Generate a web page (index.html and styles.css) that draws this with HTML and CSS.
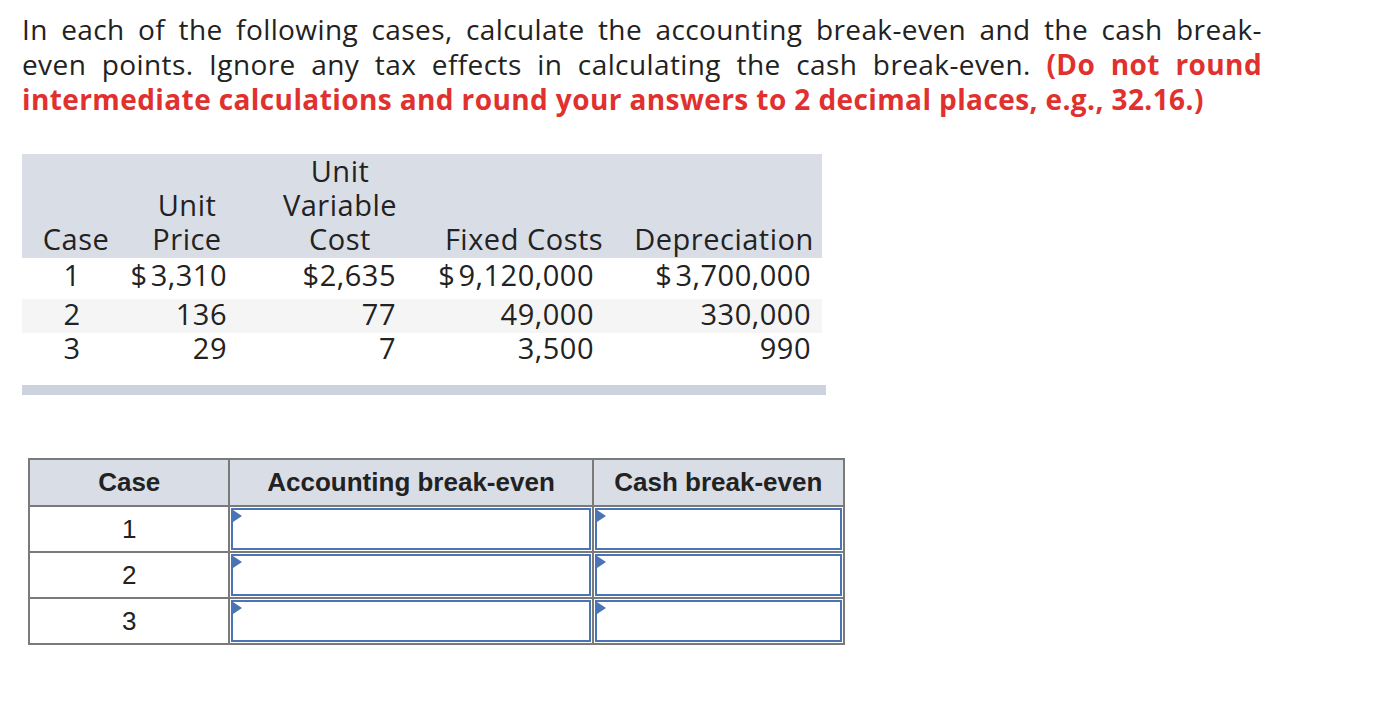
FILE: index.html
```html
<!DOCTYPE html>
<html lang="en">
<head>
<meta charset="utf-8">
<title>Break-even</title>
<link rel="stylesheet" href="styles.css">
</head>
<body>
<div class="page">
  <div class="question">
    <div class="line justify">In each of the following cases, calculate the accounting break-even and the cash break-</div>
    <div class="line justify">even points. Ignore any tax effects in calculating the cash break-even. <strong class="red">(Do not round</strong></div>
    <div class="line"><strong class="red">intermediate calculations and round your answers to 2 decimal places, e.g., 32.16.)</strong></div>
  </div>

  <div class="data">
    <table class="data-table">
      <colgroup>
        <col class="c1"><col class="c2"><col class="c3"><col class="c4"><col class="c5">
      </colgroup>
      <thead>
        <tr>
          <th>Case</th>
          <th>Unit<br>Price</th>
          <th>Unit<br>Variable<br>Cost</th>
          <th>Fixed Costs</th>
          <th class="h5">Depreciation</th>
        </tr>
      </thead>
      <tbody>
        <tr class="r1">
          <td class="d1">1</td>
          <td class="d2"><span class="cur">$</span>3,310</td>
          <td class="d3">$2,635</td>
          <td class="d4"><span class="cur">$</span>9,120,000</td>
          <td class="d5"><span class="cur">$</span>3,700,000</td>
        </tr>
        <tr class="r2">
          <td class="d1">2</td>
          <td class="d2">136</td>
          <td class="d3">77</td>
          <td class="d4">49,000</td>
          <td class="d5">330,000</td>
        </tr>
        <tr class="r3">
          <td class="d1">3</td>
          <td class="d2">29</td>
          <td class="d3">7</td>
          <td class="d4">3,500</td>
          <td class="d5">990</td>
        </tr>
      </tbody>
    </table>
    <div class="data-bar"></div>
  </div>

  <table class="answer-table">
    <colgroup>
      <col class="a1"><col class="a2"><col class="a3">
    </colgroup>
    <thead>
      <tr>
        <th>Case</th>
        <th>Accounting break-even</th>
        <th>Cash break-even</th>
      </tr>
    </thead>
    <tbody>
      <tr>
        <td class="case">1</td>
        <td class="cell"><div class="input"><span class="flag"></span></div></td>
        <td class="cell"><div class="input"><span class="flag"></span></div></td>
      </tr>
      <tr>
        <td class="case">2</td>
        <td class="cell"><div class="input"><span class="flag"></span></div></td>
        <td class="cell"><div class="input"><span class="flag"></span></div></td>
      </tr>
      <tr>
        <td class="case">3</td>
        <td class="cell"><div class="input"><span class="flag"></span></div></td>
        <td class="cell"><div class="input"><span class="flag"></span></div></td>
      </tr>
    </tbody>
  </table>
</div>
</body>
</html>
```

FILE: styles.css
```css
* { box-sizing: border-box; }

html, body {
  margin: 0;
  padding: 0;
  background: #ffffff;
}

body {
  font-family: "Open Sans", "Lato", sans-serif;
  color: #222222;
}

.page {
  padding: 12px 0 0 22px;
}

.question {
  width: 1240px;
  font-size: 28px;
  line-height: 35px;
  letter-spacing: 0.4px;
}

.line {
  white-space: nowrap;
}

.line.justify {
  white-space: normal;
  text-align: justify;
  text-align-last: justify;
}

.red {
  color: #e0312f;
  font-weight: 700;
}

.data {
  width: 804px;
  margin-top: 37px;
}

.data-table {
  width: 800px;
  border-collapse: collapse;
  font-size: 29px;
  letter-spacing: 0.5px;
  line-height: 29px;
}

.data-table col.c1 { width: 108px; }
.data-table col.c2 { width: 114px; }
.data-table col.c3 { width: 192px; }
.data-table col.c4 { width: 176px; }
.data-table col.c5 { width: 210px; }

.data-table th {
  background: #d9dde6;
  font-weight: 400;
  text-align: center;
  vertical-align: bottom;
  line-height: 34px;
  padding: 0 0 2px;
  white-space: nowrap;
}

.data-table th.h5 {
  padding-left: 14px;
}

.data-table td {
  padding: 0 0 5px;
  text-align: right;
  white-space: nowrap;
}

.data-table tr.r1 td { padding-top: 2px; padding-bottom: 10px; }
.data-table tr.r2 td { background: #f5f5f5; }

.data-table td.d1 { text-align: center; padding-right: 8px; }
.data-table td.d2 { padding-right: 17px; }
.data-table td.d3 { padding-right: 40px; }
.data-table td.d4 { padding-right: 18px; }
.data-table td.d5 { padding-right: 11px; }

.cur {
  margin-right: 3px;
}

.data-bar {
  height: 10px;
  margin-top: 18px;
  background: #ccd3df;
}

.answer-table {
  margin: 63px 0 0 6px;
  width: 817px;
  border-collapse: collapse;
  font-family: "Liberation Sans", Arial, sans-serif;
  font-size: 26px;
  color: #222222;
}

.answer-table col.a1 { width: 201px; }
.answer-table col.a2 { width: 364px; }
.answer-table col.a3 { width: 252px; }

.answer-table th,
.answer-table td {
  border: 2px solid #7a7a7a;
}

.answer-table th {
  background: #d9dde6;
  font-weight: 700;
  height: 47px;
  padding: 0;
  text-align: center;
}

.answer-table td.case {
  text-align: center;
  height: 46px;
  padding: 0;
}

.answer-table td.cell {
  padding: 1px;
  height: 46px;
}

.input {
  position: relative;
  height: 42px;
  border: 2px solid #4a74b6;
  background: #ffffff;
}

.flag {
  position: absolute;
  left: 0;
  top: 0;
  width: 0;
  height: 0;
  border-left: 9px solid #4a74b6;
  border-top: 6px solid transparent;
  border-bottom: 6px solid transparent;
}
```
